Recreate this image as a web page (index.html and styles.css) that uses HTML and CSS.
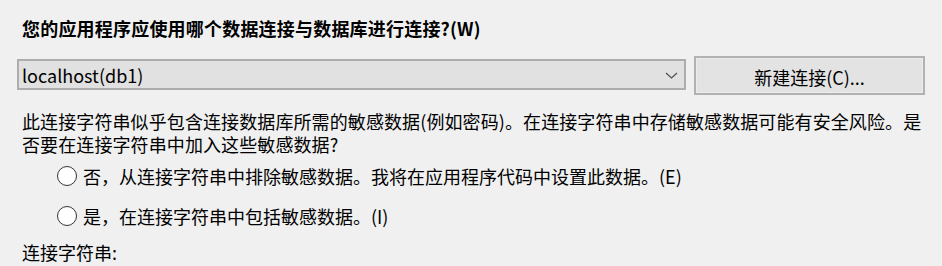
FILE: index.html
```html
<!DOCTYPE html>
<html lang="zh-CN">
<head>
<meta charset="utf-8">
<title>选择数据连接</title>
<link rel="stylesheet" href="styles.css">
</head>
<body>
<div class="page">
  <div class="title">您的应用程序应使用哪个数据连接与数据库进行连接?(W)</div>
  <div class="conn-row">
    <div class="combo">
      <span class="combo-text">localhost(db1)</span>
      <svg class="chevron" width="13" height="7" viewBox="0 0 13 7"><path d="M1 1 L6.5 6 L12 1" fill="none" stroke="#4d4d4d" stroke-width="1.1"/></svg>
    </div>
    <div class="btn">新建连接(C)...</div>
  </div>
  <p class="desc">此连接字符串似乎包含连接数据库所需的敏感数据(例如密码)。在连接字符串中存储敏感数据可能有安全风险。是否要在连接字符串中加入这些敏感数据?</p>
  <div class="options">
    <label class="option"><span class="radio"></span><span>否，从连接字符串中排除敏感数据。我将在应用程序代码中设置此数据。(E)</span></label>
    <label class="option"><span class="radio"></span><span>是，在连接字符串中包括敏感数据。(I)</span></label>
  </div>
  <div class="label">连接字符串:</div>
</div>
</body>
</html>
```
FILE: styles.css
```css
html, body {
  margin: 0;
  padding: 0;
  background: #f0f0f0;
}
body {
  font-family: "Noto Sans CJK SC", "Noto Sans", sans-serif;
  font-size: 18px;
  color: #000;
  width: 942px;
  height: 266px;
  overflow: hidden;
}
.page {
  padding: 15px 17px 0 17px;
}
.title {
  font-weight: bold;
  line-height: 26px;
  padding-left: 5px;
  letter-spacing: 0.2px;
}
.conn-row {
  display: flex;
  align-items: flex-start;
  gap: 8px;
  margin-top: 15px;
}
.combo {
  flex: 1;
  height: 31px;
  box-sizing: border-box;
  border: 2px solid #adadad;
  background: #e1e1e1;
  display: flex;
  align-items: center;
  justify-content: space-between;
  padding: 0 6px 0 3px;
  margin-top: 3px;
}
.combo-text {
  line-height: 27px;
  padding-top: 1px;
}
.chevron {
  display: block;
  margin-top: 1px;
}
.btn {
  width: 231px;
  height: 39px;
  box-sizing: border-box;
  border: 2px solid #b2b2b2;
  background: #e3e3e3;
  box-shadow: inset 0 0 0 1px #ececec;
  display: flex;
  align-items: center;
  justify-content: center;
  padding-top: 3px;
}
.desc {
  margin: 15px 0 0 0;
  padding-left: 5px;
  line-height: 23px;
  letter-spacing: 0.1px;
}
.options {
  display: flex;
  flex-direction: column;
  padding-left: 40px;
}
.option {
  display: flex;
  align-items: center;
  gap: 6px;
  height: 40px;
}
.radio {
  width: 20px;
  height: 20px;
  box-sizing: border-box;
  border: 1.5px solid #333;
  border-radius: 50%;
  background: #fff;
  flex: none;
}
.label {
  margin-top: 5px;
  padding-left: 5px;
  line-height: 23px;
}
```
